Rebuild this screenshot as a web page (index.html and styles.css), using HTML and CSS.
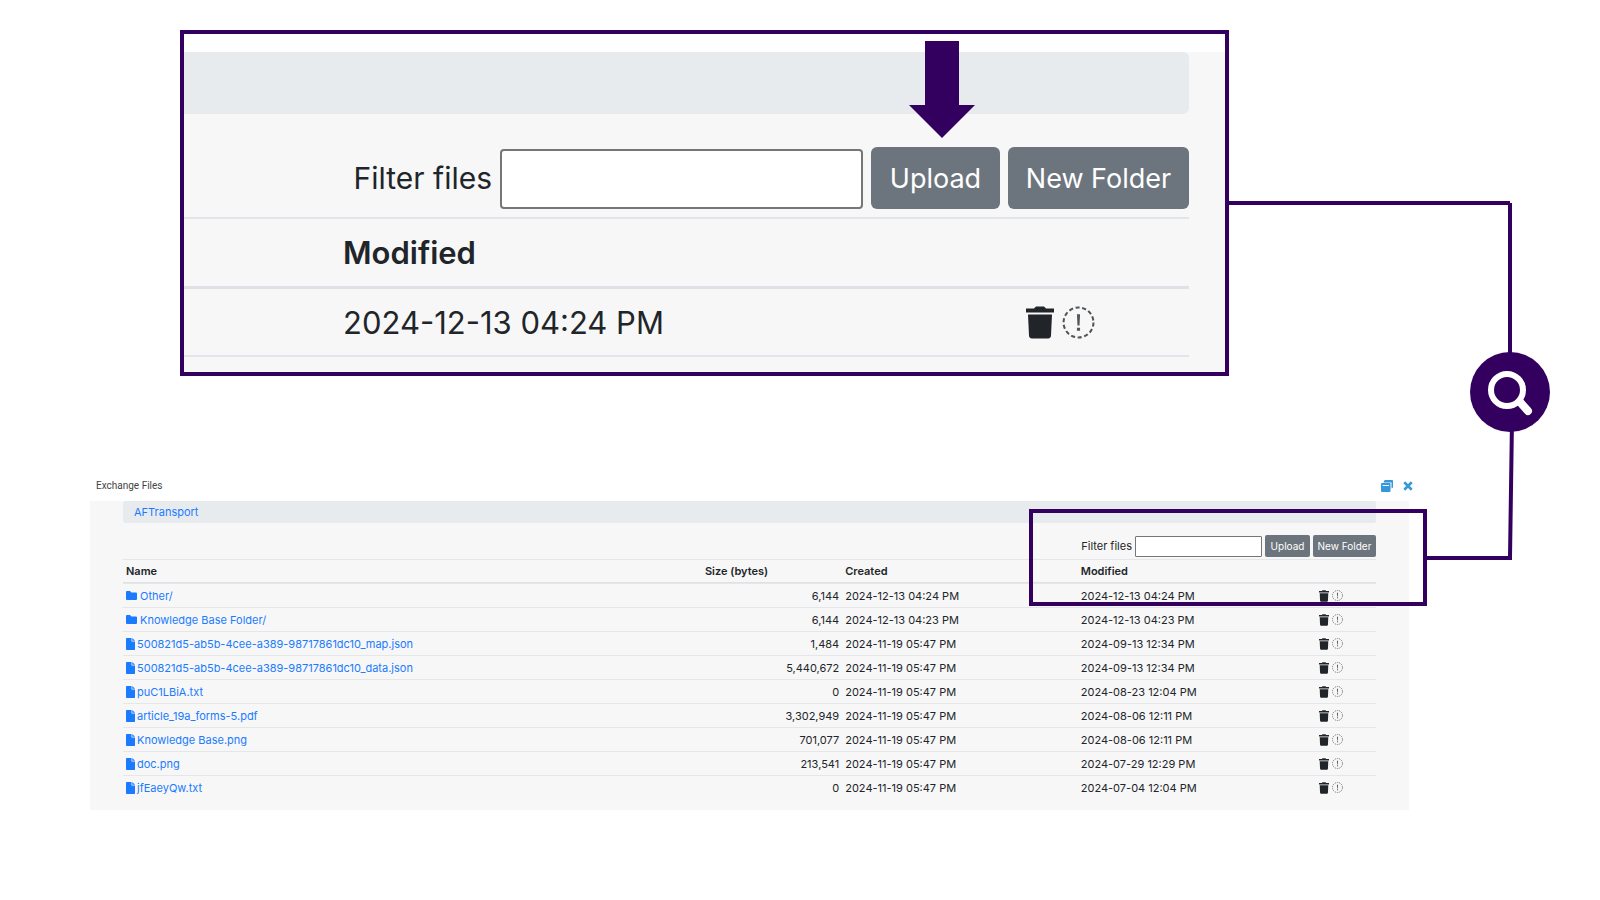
FILE: index.html
```html
<!DOCTYPE html>
<html lang="en">
<head>
    <meta charset="UTF-8">
    <meta name="viewport" content="width=device-width, initial-scale=1.0">
    <title>Exchange Files</title>
    <link rel="stylesheet" href="styles.css">
</head>
<body>

    <svg class="sprite" aria-hidden="true">
        <symbol id="icon-trash" viewBox="0 0 28 32">
            <path d="M0 2h8l2-2h8l2 2h8v4H0zM2 8h24l-1 21q-.2 3-3 3H6q-2.800 0-3-3z"/>
        </symbol>
        <symbol id="icon-alert" viewBox="0 0 32 32">
            <circle cx="16" cy="16" r="14.500" fill="none" stroke="currentColor" stroke-width="2" stroke-dasharray="4 2.500"/>
            <path d="M14.500 8h3l-.5 11h-2zM14.500 21h3v3h-3z"/>
        </symbol>
        <symbol id="icon-folder" viewBox="0 0 22 18">
            <path d="M0 2q0-2 2-2h6l3 3h9q2 0 2 2v11q0 2-2 2H2q-2 0-2-2z"/>
        </symbol>
        <symbol id="icon-file" viewBox="0 0 18 24">
            <path d="M0 1.500Q0 0 1.500 0H11v7h7v15.500q0 1.500-1.500 1.500h-15Q0 24 0 22.500zM12.500 0 18 5.500h-5.500z"/>
        </symbol>
    </svg>

    <section class="callout">
        <div class="callout-bar"></div>
        <div class="toolbar">
            <label for="filterZoom">Filter files</label>
            <input type="text" id="filterZoom">
            <button type="button">Upload</button>
            <button type="button">New Folder</button>
        </div>
        <table>
            <thead>
                <tr><th>Modified</th><th class="actions"></th></tr>
            </thead>
            <tbody>
                <tr>
                    <td>2024-12-13 04:24 PM</td>
                    <td class="actions"><div class="icons"><svg class="trash"><use href="#icon-trash"/></svg><svg class="alert"><use href="#icon-alert"/></svg></div></td>
                </tr>
            </tbody>
        </table>
        <svg class="arrow" viewBox="0 0 66 97"><path d="M16 0h34v64h16L33 97 0 64h16z"/></svg>
    </section>

    <section class="panel">
        <header class="panel-title">
            <h1>Exchange Files</h1>
            <button type="button" aria-label="Restore"><svg class="restore" viewBox="0 0 12 12"><path d="M4 0h7q1 0 1 1v6q0 1-1.500 1.500V2.500H2.500Q3 0 4 0z"/><path d="M1 3h7.500q1 0 1 1v7q0 1-1 1H1q-1 0-1-1V4q0-1 1-1zm.5 2v1H8V5z"/></svg></button>
            <button type="button" aria-label="Close"><svg class="close" viewBox="0 0 8 8"><path d="M1 1l6 6M7 1L1 7"/></svg></button>
        </header>
        <div class="panel-body">
            <nav class="breadcrumb"><a href="#">AFTransport</a></nav>
            <div class="toolbar">
                <label for="filter">Filter files</label>
                <input type="text" id="filter">
                <button type="button">Upload</button>
                <button type="button">New Folder</button>
            </div>
            <table>
                <thead>
                    <tr>
                        <th class="name">Name</th>
                        <th class="size">Size (bytes)</th>
                        <th class="created">Created</th>
                        <th class="modified">Modified</th>
                        <th class="actions"></th>
                    </tr>
                </thead>
                <tbody id="fileRows"></tbody>
            </table>
        </div>
        <div class="highlight"></div>
    </section>

    <!-- Lines joining the callout, the magnifier and the highlighted area -->
    <svg class="connector" viewBox="0 0 321 360">
        <path class="line" d="M0 3h281M281 3v160M283 220l-2 138M198 358h85"/>
        <circle cx="281" cy="192" r="40"/>
        <circle class="lens" cx="278" cy="190" r="16"/>
        <path class="handle" d="M291 202l8 9"/>
    </svg>

    <script>
        const files = [
            ['Other/', '6,144', '2024-12-13 04:24 PM', '2024-12-13 04:24 PM'],
            ['Knowledge Base Folder/', '6,144', '2024-12-13 04:23 PM', '2024-12-13 04:23 PM'],
            ['500821d5-ab5b-4cee-a389-98717861dc10_map.json', '1,484', '2024-11-19 05:47 PM', '2024-09-13 12:34 PM'],
            ['500821d5-ab5b-4cee-a389-98717861dc10_data.json', '5,440,672', '2024-11-19 05:47 PM', '2024-09-13 12:34 PM'],
            ['puC1LBiA.txt', '0', '2024-11-19 05:47 PM', '2024-08-23 12:04 PM'],
            ['article_19a_forms-5.pdf', '3,302,949', '2024-11-19 05:47 PM', '2024-08-06 12:11 PM'],
            ['Knowledge Base.png', '701,077', '2024-11-19 05:47 PM', '2024-08-06 12:11 PM'],
            ['doc.png', '213,541', '2024-11-19 05:47 PM', '2024-07-29 12:29 PM'],
            ['jfEaeyQw.txt', '0', '2024-11-19 05:47 PM', '2024-07-04 12:04 PM']
        ];

        document.getElementById('fileRows').innerHTML = files.map(([name, size, created, modified]) => {
            const icon = name.endsWith('/') ? 'folder' : 'file';
            return `<tr>
                <td><a href="#"><svg class="${icon}"><use href="#icon-${icon}"/></svg>${name}</a></td>
                <td class="bytes">${size}</td>
                <td>${created}</td>
                <td>${modified}</td>
                <td class="actions"><div class="icons"><svg class="trash"><use href="#icon-trash"/></svg><svg class="alert"><use href="#icon-alert"/></svg></div></td>
            </tr>`;
        }).join('');
    </script>
</body>
</html>
```
FILE: styles.css
```css
* {
    box-sizing: border-box;
}
body {
    position: relative;
    margin: 0;
    padding-top: 30px;
    background-color: #fff;
    color: #212529;
    font-family: Inter, "Liberation Sans", sans-serif;
}
.sprite {
    display: none;
}
svg {
    fill: currentColor;
}
table {
    width: 100%;
    border-collapse: separate;
    border-spacing: 0;
    table-layout: fixed;
}
th, td {
    padding: 0;
    text-align: left;
    white-space: nowrap;
}
th {
    font-weight: 600;
}
.icons {
    display: flex;
    align-items: center;
}
.toolbar {
    display: flex;
    justify-content: flex-end;
    align-items: flex-end;
}
.toolbar label {
    align-self: center;
}
.toolbar input {
    border: 1px solid #767676;
    background-color: #fff;
}
.toolbar button {
    padding: 0;
    border: none;
    background-color: #6c757d;
    color: #fff;
    font-family: inherit;
}

/* Enlarged view */
.callout {
    position: relative;
    margin: 0 371px 0 180px;
    padding-bottom: 15px;
    border: 4px solid #330060;
    padding-right: 36px;
    background: linear-gradient(#fff 18px, #f7f7f7 18px);
    font-size: 31px;
}
.callout-bar {
    height: 62px;
    margin-top: 18px;
    border-radius: 0 6px 6px 0;
    background-color: #e8ebee;
}
.callout .toolbar {
    gap: 8px;
    padding: 33px 0 8px;
}
.callout .toolbar label {
    font-size: 30px;
}
.callout .toolbar input {
    width: 363px;
    height: 60px;
    border-width: 2px;
    border-radius: 4px;
}
.callout .toolbar button {
    width: 181px;
    height: 62px;
    border-radius: 6px;
    font-size: 27px;
}
.callout .toolbar input + button {
    width: 129px;
}
.callout th {
    height: 72px;
    border-top: 2px solid #e2e5e9;
    border-bottom: 3px solid #dee2e6;
}
.callout td {
    height: 68px;
    border-bottom: 2px solid #e2e5e9;
}
.callout th:first-child, .callout td:first-child {
    padding-left: 159px;
}
.callout .actions {
    width: 163px;
}
.callout .trash {
    width: 28px;
    height: 33px;
    margin-right: 8px;
}
.callout .alert {
    width: 33px;
    height: 33px;
}
.alert {
    color: #50555a;
}
.arrow {
    position: absolute;
    top: 7px;
    right: 250px;
    width: 66px;
    height: 97px;
    color: #330060;
}

/* File browser */
.panel {
    position: relative;
    margin: 94px 191px 0 90px;
    font-size: 11px;
}
.panel-title {
    display: flex;
    align-items: center;
    height: 31px;
    padding-left: 6px;
}
.panel-title h1 {
    flex: 1;
    margin: 0;
    color: #444;
    font-family: Roboto, sans-serif;
    font-size: 10px;
    font-weight: 400;
}
.panel-title button {
    display: flex;
    margin-left: 10px;
    margin-right: -4px;
    padding: 0;
    border: none;
    background: none;
    color: #3498db;
}
.panel-title button:first-of-type {
    margin-right: 0;
}
.restore {
    width: 12px;
    height: 12px;
}
.close {
    width: 10px;
    height: 10px;
    stroke: currentColor;
    stroke-width: 2;
}
.panel-body {
    padding: 0 33px 11px;
    background-color: #f7f7f7;
}
.panel a {
    color: #1a7bff;
    text-decoration: none;
}
.breadcrumb {
    height: 22px;
    padding-left: 11px;
    border-radius: 2px;
    background-color: #e8ebee;
    line-height: 23px;
}
.panel .toolbar {
    gap: 3px;
    padding: 12px 0 2px;
}
.panel .toolbar input {
    width: 127px;
    height: 21px;
    border-radius: 1px;
}
.panel .toolbar button {
    width: 63px;
    height: 22px;
    border-radius: 2px;
    font-size: 10px;
}
.panel .toolbar input + button {
    width: 45px;
}
.panel th, .panel td {
    height: 24px;
    padding: 0 3px;
    border-top: 1px solid #e4e7ea;
}
.panel th {
    border-bottom: 1px solid #dee2e6;
}
.name {
    width: 46.2%;
}
.size {
    width: 11.2%;
}
.created {
    width: 18.8%;
}
.modified {
    width: 19%;
}
.panel .bytes {
    text-align: right;
}
.panel td a {
    display: flex;
    align-items: center;
}
.folder {
    width: 11px;
    height: 9px;
    margin-right: 3px;
}
.file {
    width: 9px;
    height: 12px;
    margin-right: 2px;
}
.panel .trash {
    width: 10px;
    height: 12px;
    margin-right: 3px;
}
.panel .alert {
    width: 11px;
    height: 11px;
}
.highlight {
    position: absolute;
    top: 39px;
    right: -18px;
    width: 398px;
    height: 97px;
    border: 4px solid #330060;
}

.connector {
    position: absolute;
    top: 200px;
    right: 50px;
    width: 321px;
    height: 360px;
    color: #330060;
}
.line {
    fill: none;
    stroke: currentColor;
    stroke-width: 4;
}
.lens, .handle {
    fill: none;
    stroke: #fff;
    stroke-width: 6;
}
.handle {
    stroke-width: 8;
    stroke-linecap: round;
}
```
